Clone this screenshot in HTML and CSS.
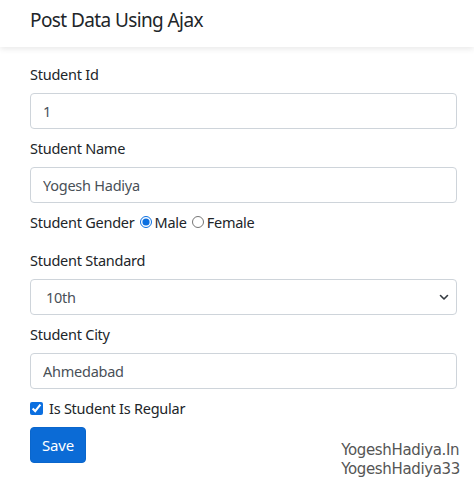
FILE: index.html
```html
<!DOCTYPE html>
<html lang="en">
<head>
<meta charset="utf-8">
<title>Post Data Using Ajax</title>
<link rel="stylesheet" href="styles.css">
</head>
<body>
<header class="topbar">
  <h1 class="title">Post Data Using Ajax</h1>
</header>
<main class="form">
  <div class="field">
    <label class="label" for="sid">Student Id</label>
    <input class="control" id="sid" type="text" value="1">
  </div>
  <div class="field">
    <label class="label" for="sname">Student Name</label>
    <input class="control" id="sname" type="text" value="Yogesh Hadiya">
  </div>
  <div class="gender">
    <span>Student Gender</span>
    <input class="radio" type="radio" name="g" id="gm" checked><label for="gm">Male</label>
    <input class="radio" type="radio" name="g" id="gf"><label for="gf">Female</label>
  </div>
  <div class="field">
    <label class="label" for="sstd">Student Standard</label>
    <div class="select-wrap">
      <select class="control select" id="sstd">
        <option>10th</option>
        <option>11th</option>
        <option>12th</option>
      </select>
      <svg class="chevron" width="10" height="8" viewBox="0 0 10 8"><path d="M1.5 2.5 L5 6 L8.5 2.5" fill="none" stroke="#343a40" stroke-width="1.6" stroke-linecap="round" stroke-linejoin="round"/></svg>
    </div>
  </div>
  <div class="field">
    <label class="label" for="scity">Student City</label>
    <input class="control" id="scity" type="text" value="Ahmedabad">
  </div>
  <div class="check">
    <input class="checkbox" type="checkbox" id="reg" checked>
    <label for="reg">Is Student Is Regular</label>
  </div>
  <div class="actions">
    <button class="btn" type="button">Save</button>
    <div class="watermark">
      <div>YogeshHadiya.In</div>
      <div>YogeshHadiya33</div>
    </div>
  </div>
</main>
</body>
</html>
```
FILE: styles.css
```css
* { box-sizing: border-box; }
html, body { margin: 0; padding: 0; background: #fff; }
body {
  font-family: "Noto Sans", "Open Sans", sans-serif;
  font-size: 14.5px;
  letter-spacing: -0.25px;
  line-height: 22px;
  color: #212529;
  width: 474px;
  height: 482px;
  overflow: hidden;
}
.topbar {
  height: 47px;
  padding: 6px 30px 0;
  box-shadow: 0 2px 6px rgba(0,0,0,0.09);
  position: relative;
  z-index: 1;
}
.title {
  margin: 0;
  font-size: 19px;
  letter-spacing: -0.6px;
  line-height: 28px;
  font-weight: 400;
  color: #212529;
}
.form {
  padding: 16px 17px 0 30px;
}
.field { margin-bottom: 8px; }
.label { display: block; margin-bottom: 8px; }
.control {
  display: block;
  width: 100%;
  height: 36px;
  padding: 0 12px;
  border: 1px solid #ced4da;
  border-radius: 4px;
  font-family: inherit;
  font-size: 14.5px;
  letter-spacing: -0.25px;
  color: #495057;
  background: #fff;
  outline: none;
}
.select-wrap { position: relative; }
.select { appearance: none; -webkit-appearance: none; padding-left: 15px; }
.chevron { position: absolute; right: 8px; top: 14px; }
.gender {
  display: flex;
  align-items: center;
  margin-bottom: 16px;
}
.radio {
  margin: 0 3px 0 5px;
  width: 12px;
  height: 12px;
  accent-color: #0b6fe0;
}
.check {
  display: flex;
  align-items: center;
  margin-bottom: 8px;
}
.checkbox {
  margin: 0 6px 0 0;
  width: 13px;
  height: 13px;
  accent-color: #0b6fe0;
}
.actions {
  display: flex;
  justify-content: space-between;
  align-items: flex-start;
}
.btn {
  height: 36px;
  width: 56px;
  padding: 0;
  border: 1px solid #0a66cc;
  border-radius: 4px;
  background: #0b6bd6;
  color: #fff;
  font-family: inherit;
  font-size: 15px;
  letter-spacing: -0.2px;
  line-height: 22px;
}
.watermark {
  margin-top: 14px;
  margin-right: -3px;
  font-family: "DejaVu Sans", sans-serif;
  font-size: 15px;
  letter-spacing: -0.35px;
  line-height: 19px;
  color: #555;
  text-align: left;
}
```
